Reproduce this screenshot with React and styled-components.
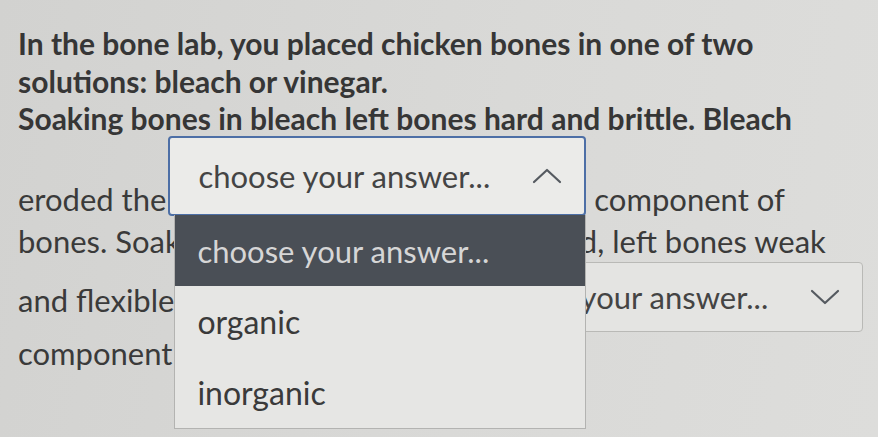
import React from 'react';
import styled, { createGlobalStyle } from 'styled-components';

const GlobalStyle = createGlobalStyle`
  html, body {
    margin: 0;
    padding: 0;
  }
  body {
    background: #d6d6d4;
    font-family: Lato, "Liberation Sans", sans-serif;
  }
`;

const Page = styled.div`
  box-sizing: border-box;
  width: 878px;
  height: 437px;
  overflow: hidden;
  padding: 24px 0 0 18px;
  background: linear-gradient(100deg, #d2d2d0 0%, #d9d9d7 55%, #dddddb 100%);
  color: #3a3a3a;
  white-space: nowrap;
`;

const Lead = styled.div`
  font-size: 30px;
  line-height: ${(p) => p.$lh}px;
  font-weight: 700;
  color: #363636;
`;

const Body = styled.div`
  font-size: 31px;
  line-height: 42px;
  font-weight: 400;
`;

const SelectBox = styled.span`
  position: relative;
  display: inline-flex;
  align-items: center;
  justify-content: space-between;
  box-sizing: border-box;
  width: ${(p) => p.$width}px;
  height: ${(p) => (p.$open ? 80 : 70)}px;
  padding: 0 22px 0 28px;
  border: ${(p) => (p.$open ? '2px solid #4d6fa6' : '1px solid #b9b9b6')};
  border-radius: 4px;
  background: ${(p) => (p.$open ? '#ebebe9' : '#e4e4e2')};
  vertical-align: ${(p) => (p.$open ? '23px' : '3px')};
  margin-left: ${(p) => p.$gap}px;
  line-height: normal;
  color: #444;
`;

const Placeholder = styled.span`
  white-space: nowrap;
`;

const Menu = styled.ul`
  position: absolute;
  top: calc(100% + 1px);
  left: 4px;
  right: -2px;
  z-index: 2;
  margin: 0;
  padding: 0;
  list-style: none;
  background: #e6e6e4;
  border: 1px solid #b3b3b1;
  border-top: none;
`;

const Option = styled.li`
  display: flex;
  align-items: center;
  height: 71px;
  padding-left: 22px;
  font-size: ${(p) => (p.$active ? 31 : 32)}px;
  background: ${(p) => (p.$active ? '#4a4f56' : 'transparent')};
  color: ${(p) => (p.$active ? '#d6d6d6' : '#3a3a3a')};
`;

const Chevron = ({ up }) => (
  <svg width="30" height="16" viewBox="0 0 30 16">
    <polyline
      points={up ? '2,14 15,2 28,14' : '2,2 15,14 28,2'}
      fill="none"
      stroke="#555a60"
      strokeWidth="2.2"
      strokeLinecap="round"
      strokeLinejoin="round"
    />
  </svg>
);

const Select = ({ open, width, gap = 6, options }) => (
  <SelectBox $open={open} $width={width} $gap={gap}>
    <Placeholder>choose your answer...</Placeholder>
    <Chevron up={open} />
    {open && (
      <Menu>
        {options.map((o, i) => (
          <Option key={o} $active={i === 0}>{o}</Option>
        ))}
      </Menu>
    )}
  </SelectBox>
);

const answers = ['choose your answer...', 'organic', 'inorganic'];

export default function App() {
  return (
    <>
      <GlobalStyle />
      <Page>
        <Lead $lh={38}>
          In the bone lab, you placed chicken bones in one of two<br />
          solutions: bleach or vinegar.
        </Lead>
        <Lead $lh={36}>
          Soaking bones in bleach left bones hard and brittle. Bleach
        </Lead>
        <Body>
          eroded the
          <Select open width={418} gap={2} options={answers} /> component of<br />
          bones. Soaking them in vinegar, a mild acid, left bones weak<br />
          and flexible. Vinegar erased the
          <Select width={416} gap={4} /><br />
          component of bones.
        </Body>
      </Page>
    </>
  );
}
